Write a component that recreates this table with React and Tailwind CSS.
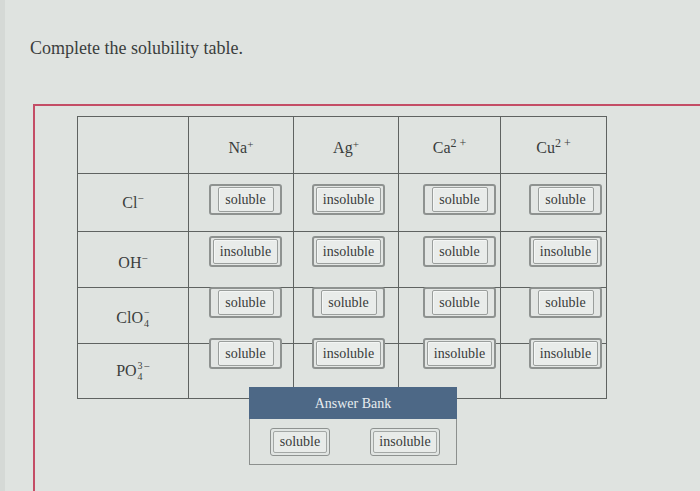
import React from "react";

const serif = { fontFamily: '"Liberation Serif", "DejaVu Serif", serif' };

function Chip({ text }) {
  return (
    <div className="w-[73px] h-[31px] rounded-[3px] border-2 border-[#8e9290] bg-[#e3e6e4] flex items-center justify-center">
      <div className="h-[25px] px-[6px] min-w-[56px] rounded-[2px] border border-[#9a9e9c] bg-[#e9ecea] shadow-[inset_1px_1px_0_#f4f6f5] flex items-center justify-center text-[14px] text-[#383b3a]">
        {text}
      </div>
    </div>
  );
}

function BankChip({ text, w }) {
  return (
    <div className={`${w} h-[28px] rounded-[3px] border border-[#8e9290] p-[2px] bg-[#e1e5e3]`}>
      <div className="h-full rounded-[2px] border border-[#a3a7a5] bg-[#e8ebe9] flex items-center justify-center text-[14px] text-[#383b3a]">
        {text}
      </div>
    </div>
  );
}

function Stack({ top, bottom }) {
  return (
    <span className="inline-flex flex-col text-[10px] leading-[11px] align-middle ml-[1px]">
      <span>{top}</span>
      <span>{bottom}</span>
    </span>
  );
}

const cell = "border-r border-b border-[#5f6361] flex";

export default function App() {
  const rows = [
    { label: <span>Cl<sup className="text-[11px]">−</sup></span>, vals: ["soluble", "insoluble", "soluble", "soluble"], pt: "pt-[10px]" },
    { label: <span className="pt-[6px]">OH<sup className="text-[11px]">−</sup></span>, vals: ["insoluble", "insoluble", "soluble", "insoluble"], pt: "pt-[4px]" },
    { label: <span className="pt-[4px] inline-flex items-center">ClO<Stack top="−" bottom="4" /></span>, vals: ["soluble", "soluble", "soluble", "soluble"], pt: "-mt-[1px]" },
    { label: <span className="inline-flex items-center">PO<Stack top="3" bottom="4" /><span className="text-[11px] self-start -mt-[1px] ml-[1px]">−</span></span>, vals: ["soluble", "insoluble", "insoluble", "insoluble"], pt: "-mt-[6px]" },
  ];
  const colPad = ["pl-[20px]", "pl-[18px]", "pl-[24px]", "pl-[28px]"];
  const heads = [
    <span>Na<sup className="text-[11px]">+</sup></span>,
    <span>Ag<sup className="text-[11px]">+</sup></span>,
    <span>Ca<sup className="text-[12px]">2 +</sup></span>,
    <span>Cu<sup className="text-[12px]">2 +</sup></span>,
  ];

  return (
    <div className="min-h-screen w-full overflow-hidden bg-[#dfe3e0] text-[#3a3d3c]" style={serif}>
      <div className="h-[491px] border-l-[5px] border-[#d5d9d6] flex flex-col">
        <p className="pl-[25px] pt-[37px] text-[18px] leading-[23px] text-[#3b3e3d]">
          Complete the solubility table.
        </p>
        <div className="ml-[28px] mt-[44px] flex-1 border-t-2 border-l-2 border-[#c44d66] pl-[42px] pt-[10px]">
          <div className="grid grid-cols-[111px_105px_105px_102px_106px] grid-rows-[57px_58px_56px_56px_55px] w-max border-l border-t border-[#5f6361]">
            <div className={cell}></div>
            {heads.map((h, i) => (
              <div key={i} className={`${cell} items-center justify-center pt-[6px] text-[16px]`}>
                {h}
              </div>
            ))}
            {rows.map((r, ri) => (
              <React.Fragment key={ri}>
                <div className={`${cell} items-center justify-center text-[16px]`}>{r.label}</div>
                {r.vals.map((v, ci) => (
                  <div key={ci} className={`${cell} items-start ${colPad[ci]}`}>
                    <div className={r.pt}>
                      <Chip text={v} />
                    </div>
                  </div>
                ))}
              </React.Fragment>
            ))}
          </div>
          <div className="ml-[172px] -mt-[12px] w-[208px] relative">
            <div className="h-[32px] bg-[#4d6886] flex items-center justify-center text-[14px] text-[#e6ecef]">
              Answer Bank
            </div>
            <div className="h-[46px] border border-t-0 border-[#8c908e] bg-[#dfe3e0] flex items-center pl-[20px] gap-[40px]">
              <BankChip text="soluble" w="w-[60px]" />
              <BankChip text="insoluble" w="w-[70px]" />
            </div>
          </div>
        </div>
      </div>
    </div>
  );
}
